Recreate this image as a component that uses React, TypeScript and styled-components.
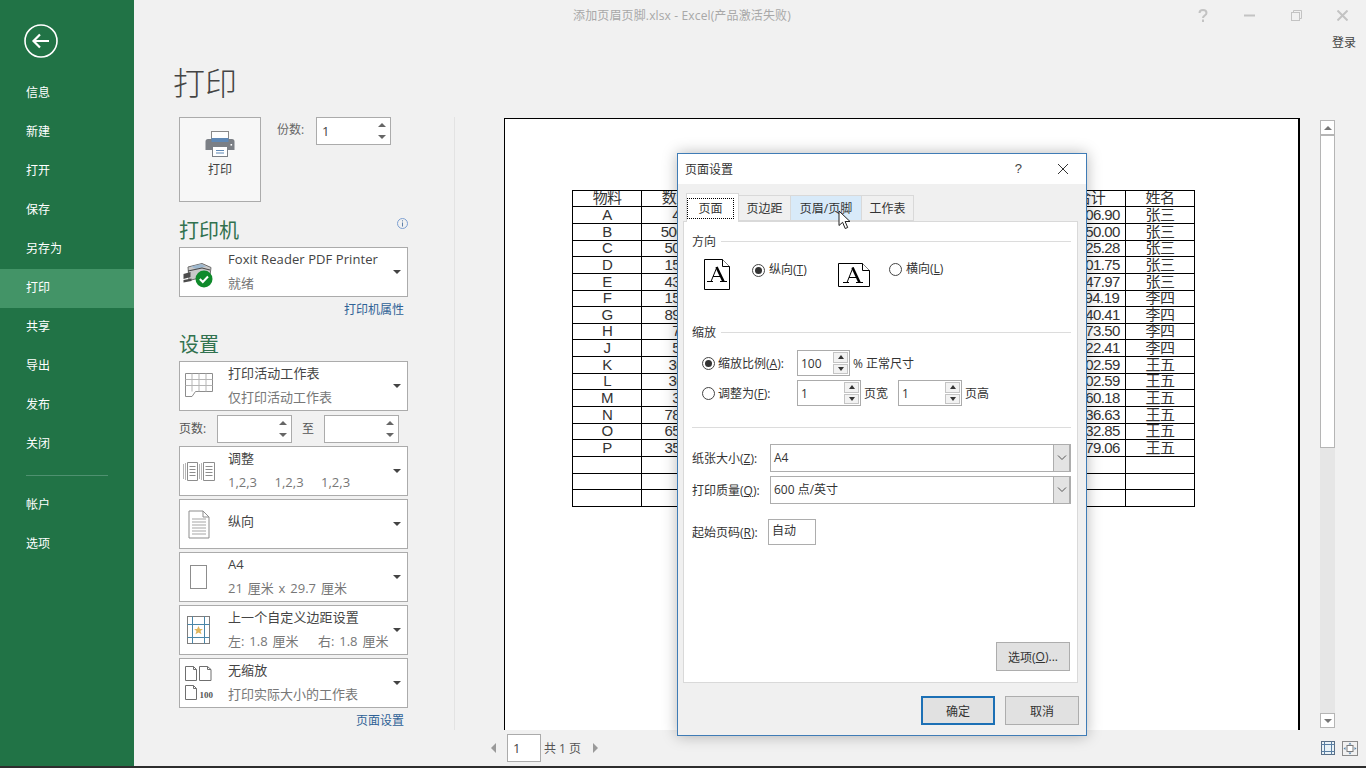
import React from "react";
import styled, { createGlobalStyle } from "styled-components";

const UI_FONT = `"Open Sans", "Noto Sans CJK SC", sans-serif`;

const GlobalStyle = createGlobalStyle`
    html, body {
        margin: 0;
        padding: 0;
        background: #f1f1f1;
    }

    * {
        box-sizing: border-box;
    }

    body {
        font-family: ${UI_FONT};
        font-size: 12px;
        color: #444;
    }
`;

const NAV_TOP = ["信息", "新建", "打开", "保存", "另存为", "打印", "共享", "导出", "发布", "关闭"];
const NAV_BOTTOM = ["帐户", "选项"];

// row heights of the sheet, the printed preview does not snap evenly
const ROW_HEIGHTS = [16, 17, 17, 16, 17, 17, 16, 17, 16, 17, 17, 16, 17, 17, 16, 17, 17, 16, 17];

const SHEET_ROWS = [
    ["物料", "数量", "合计", "姓名"],
    ["A", "4", "12006.90", "张三"],
    ["B", "5000", "15050.00", "张三"],
    ["C", "500", "12525.28", "张三"],
    ["D", "150", "10101.75", "张三"],
    ["E", "430", "12347.97", "张三"],
    ["F", "150", "11494.19", "李四"],
    ["G", "890", "12340.41", "李四"],
    ["H", "7", "12373.50", "李四"],
    ["J", "5", "10022.41", "李四"],
    ["K", "30", "10002.59", "王五"],
    ["L", "30", "10002.59", "王五"],
    ["M", "3", "12360.18", "王五"],
    ["N", "780", "18636.63", "王五"],
    ["O", "650", "12332.85", "王五"],
    ["P", "350", "12379.06", "王五"],
    ["", "", "", ""],
    ["", "", "", ""],
    ["", "", "", ""],
];

const BackIcon = () => (
    <svg width="34" height="34" viewBox="0 0 34 34" fill="none" stroke="#fff">
        <circle cx="17" cy="17" r="16" strokeWidth="1.6" />
        <path d="M25 17H10M16 10.5L9.5 17l6.5 6.5" strokeWidth="2.2" />
    </svg>
);

const BigPrinterIcon = () => (
    <svg width="30" height="26" viewBox="0 0 30 26">
        <rect x="6.5" y="0.5" width="17" height="9" fill="#fff" stroke="#8a8a8a" />
        <path d="M3 8h24a2.5 2.5 0 0 1 2.5 2.5V19H0.5v-8.500A2.500 2.500 0 0 1 3 8z" fill="#7b7f85" />
        <rect x="6.500" y="7" width="17" height="4" fill="#5f88b5" />
        <rect x="7.500" y="15.500" width="15" height="10" fill="#fff" stroke="#7b7f85" />
        <path d="M11 19.500h8M11 22h8" stroke="#5f88b5" />
        <rect x="25.500" y="13" width="1.600" height="1.600" fill="#fff" />
    </svg>
);

const PrinterStatusIcon = () => (
    <svg width="32" height="36" viewBox="0 -8 32 36">
        <path d="M5 5l14-3.500 9 4-1 8-21 5z" fill="#c9c9c9" stroke="#6d6d6d" />
        <path d="M8 4.500l10-2.500 5 2.500-10 2.500z" fill="#9db8cf" />
        <path d="M0.500 12l7-2 0 5-7 2zM0.500 18l8-1.500 0 2.500-8 1.500z" fill="#4c4c4c" />
        <path d="M5 9l14-3 8 2" fill="none" stroke="#444" />
        <circle cx="21" cy="17" r="8.500" fill="#0f8a2b" />
        <path d="M16.800 17l3 3 5.200-5.500" fill="none" stroke="#fff" strokeWidth="2" />
    </svg>
);

const InfoIcon = () => (
    <svg width="11" height="11" viewBox="0 0 11 11" fill="none">
        <circle cx="5.500" cy="5.500" r="5" stroke="#7d9fd0" />
        <path d="M5.500 4.500v4" stroke="#5d7fa8" />
        <path d="M5.500 2.300v1.100" stroke="#5d7fa8" />
    </svg>
);

const SheetIcon = () => (
    <svg width="28" height="26" viewBox="0 0 28 26" fill="none" stroke="#8d8d8d">
        <path d="M0.500 0.500h27v18h-17l-3.500 5h-6.500z" />
        <path d="M0.500 6.500h27M0.500 12.500h27M7 0.500v18M14 0.500v18M21 0.500v18" stroke="#b5b5b5" />
    </svg>
);

const CollateIcon = () => (
    <svg width="32" height="21" viewBox="0 0 32 21" fill="none" stroke="#8d8d8d">
        <path d="M0.500 3v15M2.500 2v17" stroke="#b5b5b5" />
        <path d="M4.500 1.500h10v18h-10zM6.500 5.500h6M6.500 8.500h6M6.500 11.500h6M6.500 14.500h6" />
        <path d="M16.500 3v15M18.500 2v17" stroke="#b5b5b5" />
        <path d="M20.500 1.500h11v18h-11zM22.500 5.500h7M22.500 8.500h7M22.500 11.500h7M22.500 14.500h7" />
    </svg>
);

const PortraitIcon = () => (
    <svg width="22" height="29" viewBox="0 0 22 29" fill="none" stroke="#8d8d8d">
        <path d="M1 1h14l6 6v21H1zM15 1v6h6" />
        <path d="M4 9h14M4 12h14M4 15h14M4 18h14M4 21h14M4 24h14" stroke="#a5a5a5" />
    </svg>
);

const PaperIcon = () => (
    <svg width="18" height="25" viewBox="0 0 18 25" fill="none">
        <rect x="0.500" y="0.500" width="16" height="23" stroke="#8d8d8d" />
    </svg>
);

const MarginsIcon = () => (
    <svg width="24" height="29" viewBox="0 0 24 29" fill="none">
        <rect x="0.500" y="0.500" width="22" height="27" stroke="#7d7d7d" />
        <path d="M5.500 0.500v27M17.500 0.500v27M0.500 8.500h22M0.500 21.500h22" stroke="#4a86a8" />
        <path d="M11.500 10l1.400 3h3l-2.400 2 1 3.200-3-1.800-3 1.800 1-3.200-2.400-2h3z" fill="#e0b65c" />
    </svg>
);

const NoScaleIcon = () => (
    <svg width="30" height="35" viewBox="0 0 30 35" fill="none" stroke="#6f6f6f">
        <path d="M0.500 0.500h8l3 3v11h-11zM8.500 0.500v3h3" />
        <path d="M14.500 0.500h8l3.500 3v11h-11.500zM22.500 0.500v3h3.500" />
        <path d="M0.500 19.500h8l3 3v11h-11zM8.500 19.500v3h3" />
    </svg>
);

const PortraitSheetIcon = () => (
    <svg width="26" height="31" viewBox="0 0 26 31">
        <path d="M0.500 0.500h18l7 7v23h-25z" fill="#fff" stroke="#000" />
        <path d="M18.500 0.500v7h7" fill="#fff" stroke="#000" />
        <path d="M3 22.500h6M16 22.500h7M7 22.500L13 8M9 17.500h8" fill="none" stroke="#000" />
        <path d="M12.500 8L19.500 22.500" fill="none" stroke="#000" strokeWidth="2.500" />
    </svg>
);

const LandscapeSheetIcon = () => (
    <svg width="32" height="24" viewBox="0 0 32 24">
        <path d="M0.500 0.500h24l7 7v16h-31z" fill="#fff" stroke="#000" />
        <path d="M24.500 0.500v7h7" fill="#fff" stroke="#000" />
        <path d="M5 19.500h6M18 19.500h7M9 19.500L15 4.500M11 14.500h8" fill="none" stroke="#000" />
        <path d="M14.500 4.500L21.500 19.500" fill="none" stroke="#000" strokeWidth="2.500" />
    </svg>
);

const CursorIcon = () => (
    <svg width="14" height="20" viewBox="0 0 14 20">
        <path d="M1 1v14.500l3.600-3.200 2.600 6.200 2.500-1-2.600-6h4.900z" fill="#fff" stroke="#1f1f1f" />
    </svg>
);

const HelpGlyph = () => (
    <svg width="10" height="13" viewBox="0 0 10 13" fill="none" stroke="#c3c3c3" strokeWidth="2">
        <path d="M1.500 4c0-4 7-4 7 0 0 2.500-3.500 2.500-3.500 5" />
        <path d="M5 10.500V13" />
    </svg>
);

const MinimizeGlyph = () => (
    <svg width="11" height="3" viewBox="0 0 11 3">
        <rect width="11" height="2" y="0.500" fill="#c3c3c3" />
    </svg>
);

const RestoreGlyph = () => (
    <svg width="11" height="11" viewBox="0 0 11 11" fill="none" stroke="#c3c3c3">
        <rect x="0.500" y="2.500" width="8" height="8" />
        <path d="M2.500 2.500v-2h8v8h-2" />
    </svg>
);

const CloseGlyph = () => (
    <svg width="11" height="11" viewBox="0 0 11 11" stroke="#c3c3c3" strokeWidth="2">
        <path d="M0.500 0.500l10 10M10.500 0.500l-10 10" />
    </svg>
);

const GridViewIcon = () => (
    <svg width="14" height="14" viewBox="0 0 14 14" fill="none">
        <rect x="0.500" y="0.500" width="13" height="13" fill="#e9f3f8" stroke="#5a6f86" />
        <path d="M3.500 0.500v13M10.500 0.500v13M0.500 3.500h13M0.500 10.500h13" stroke="#5a7fa3" />
    </svg>
);

const FitViewIcon = () => (
    <svg width="16" height="15" viewBox="0 0 16 15" fill="none">
        <rect x="0.500" y="0.500" width="15" height="14" stroke="#8a8a8a" />
        <rect x="5" y="4.500" width="6" height="6" fill="#fff" stroke="#7a7a7a" />
        <path d="M8 1.500L6.500 3.500h3zM8 13.500L6.500 11.500h3zM1.500 7.500L3.500 6v3zM14.500 7.500L12.500 6v3z" fill="#5a86ab" />
    </svg>
);

const Key = ({ children }: { children: React.ReactNode }) => <AccessKey>{children}</AccessKey>;

interface SpinBoxProps {
    value: string;
    width: number;
}

const SpinBox = ({ value, width }: SpinBoxProps) => (
    <SpinFrame $width={width}>
        {value}
        <SpinButtons>
            <SpinButton><Triangle $dir="up" /></SpinButton>
            <SpinButton><Triangle $dir="down" /></SpinButton>
        </SpinButtons>
    </SpinFrame>
);

interface PlainSpinProps {
    value?: string;
    width: number;
}

const PlainSpin = ({ value, width }: PlainSpinProps) => (
    <PlainSpinFrame $width={width}>
        {value}
        <PlainArrows>
            <Triangle $dir="up" />
            <Triangle $dir="down" />
        </PlainArrows>
    </PlainSpinFrame>
);

interface OptionDropdownProps {
    icon: React.ReactNode;
    title: string;
    subtitle?: React.ReactNode;
}

const OptionDropdown = ({ icon, title, subtitle }: OptionDropdownProps) => (
    <Dropdown>
        <DropdownIcon>{icon}</DropdownIcon>
        <DropdownText $single={!subtitle}>
            <DropdownTitle>{title}</DropdownTitle>
            {subtitle && <DropdownSubtitle>{subtitle}</DropdownSubtitle>}
        </DropdownText>
        <Triangle $dir="down" $size={4} $color="#444" />
    </Dropdown>
);

const SelectBox = ({ value }: { value: string }) => (
    <SelectFrame>
        <SelectValue>{value}</SelectValue>
        <SelectArrow>
            <svg width="10" height="6" viewBox="0 0 10 6" fill="none" stroke="#555">
                <path d="M1 0.500l4 4 4-4" />
            </svg>
        </SelectArrow>
    </SelectFrame>
);

const Sidebar = () => (
    <SidebarWrapper>
        <BackButton><BackIcon /></BackButton>
        {NAV_TOP.map((item) => (
            <NavItem key={item} $active={item === "打印"}>{item}</NavItem>
        ))}
        <NavDivider />
        {NAV_BOTTOM.map((item) => (
            <NavItem key={item}>{item}</NavItem>
        ))}
    </SidebarWrapper>
);

const PrintPanel = () => (
    <LeftColumn>
        <PageTitle>打印</PageTitle>
        <Panel>
            <PrintRow>
                <PrintButton>
                    <BigPrinterIcon />
                    <span>打印</span>
                </PrintButton>
                <CopiesLabel>份数:</CopiesLabel>
                <PlainSpin value="1" width={75} />
            </PrintRow>

            <SectionHead>
                打印机
                <InfoMark><InfoIcon /></InfoMark>
            </SectionHead>
            <Dropdown>
                <DropdownIcon><PrinterStatusIcon /></DropdownIcon>
                <DropdownText>
                    <DropdownTitle>Foxit Reader PDF Printer</DropdownTitle>
                    <DropdownSubtitle>就绪</DropdownSubtitle>
                </DropdownText>
                <Triangle $dir="down" $size={4} $color="#444" />
            </Dropdown>
            <PanelLink>打印机属性</PanelLink>

            <SettingsHead>设置</SettingsHead>
            <OptionDropdown icon={<SheetIcon />} title="打印活动工作表" subtitle="仅打印活动工作表" />
            <PagesRow>
                <PagesLabel>页数:</PagesLabel>
                <PlainSpin width={75} />
                <ToLabel>至</ToLabel>
                <PlainSpin width={75} />
            </PagesRow>
            <DropdownStack>
                <OptionDropdown
                    icon={<CollateIcon />}
                    title="调整"
                    subtitle={<CollatePages>1,2,3    1,2,3    1,2,3</CollatePages>}
                />
                <OptionDropdown icon={<PortraitIcon />} title="纵向" />
                <OptionDropdown icon={<PaperIcon />} title="A4" subtitle="21 厘米 x 29.7 厘米" />
                <OptionDropdown icon={<MarginsIcon />} title="上一个自定义边距设置" subtitle="左: 1.8 厘米    右: 1.8 厘米" />
                <OptionDropdown
                    icon={
                        <NoScaleWrap>
                            <NoScaleIcon />
                            <NoScaleBadge>100</NoScaleBadge>
                        </NoScaleWrap>
                    }
                    title="无缩放"
                    subtitle="打印实际大小的工作表"
                />
            </DropdownStack>
            <PanelLink>页面设置</PanelLink>
        </Panel>
    </LeftColumn>
);

const Preview = () => (
    <PreviewColumn>
        <PreviewRow>
            <Page>
                <SheetTable>
                    <tbody>
                        {SHEET_ROWS.map((row, index) => (
                            <SheetRow key={index} $height={ROW_HEIGHTS[index]}>
                                <td>{row[0]}</td>
                                <td>{row[1]}</td>
                                <td /><td /><td /><td /><td />
                                <td>{row[2]}</td>
                                <td>{row[3]}</td>
                            </SheetRow>
                        ))}
                    </tbody>
                </SheetTable>
            </Page>
            <Scrollbar>
                <ScrollButton><Triangle $dir="up" $size={4} $color="#777" /></ScrollButton>
                <ScrollThumb />
                <ScrollTrack />
                <ScrollButton><Triangle $dir="down" $size={4} $color="#777" /></ScrollButton>
            </Scrollbar>
        </PreviewRow>
        <PagerBar>
            <PagerGroup>
                <SideArrow $dir="left" />
                <PageInput>1</PageInput>
                <PageTotal>共 1 页</PageTotal>
                <SideArrow $dir="right" />
            </PagerGroup>
            <ViewIcons>
                <GridViewIcon />
                <FitViewIcon />
            </ViewIcons>
        </PagerBar>
    </PreviewColumn>
);

const PageSetupDialog = () => (
    <Dialog>
        <DialogTitleBar>
            <span>页面设置</span>
            <DialogActions>
                <HelpMark>?</HelpMark>
                <svg width="12" height="12" viewBox="0 0 12 12" stroke="#333">
                    <path d="M1 1l10 10M11 1L1 11" />
                </svg>
            </DialogActions>
        </DialogTitleBar>

        <TabList>
            <Tab $selected><TabFocus>页面</TabFocus></Tab>
            <Tab $width={52}>页边距</Tab>
            <Tab $width={71} $hover>页眉/页脚</Tab>
            <Tab $width={52}>工作表</Tab>
        </TabList>
        <CursorMark><CursorIcon /></CursorMark>

        <TabPanel>
            <GroupHead>方向</GroupHead>
            <OrientationRow>
                <OrientationOption $width={134}>
                    <PortraitSheetIcon />
                    <RadioLabel $gap={22}>
                        <Radio $checked />
                        <span>纵向(<Key>T</Key>)</span>
                    </RadioLabel>
                </OrientationOption>
                <OrientationOption $shift={4}>
                    <LandscapeSheetIcon />
                    <RadioLabel $gap={19} $shift={-3}>
                        <Radio />
                        <span>横向(<Key>L</Key>)</span>
                    </RadioLabel>
                </OrientationOption>
            </OrientationRow>

            <GroupHead>缩放</GroupHead>
            <ScaleRow $top={9}>
                <ScaleChoice>
                    <Radio $checked />
                    <span>缩放比例(<Key>A</Key>):</span>
                </ScaleChoice>
                <SpinBox value="100" width={53} />
                <span>% 正常尺寸</span>
            </ScaleRow>
            <ScaleRow $top={4}>
                <ScaleChoice>
                    <Radio />
                    <span>调整为(<Key>F</Key>):</span>
                </ScaleChoice>
                <SpinBox value="1" width={64} />
                <span>页宽</span>
                <SpinBox value="1" width={64} />
                <span>页高</span>
            </ScaleRow>
            <GroupLine />

            <FieldRow $top={16}>
                <FieldLabel $width={78}>纸张大小(<Key>Z</Key>):</FieldLabel>
                <SelectBox value="A4" />
            </FieldRow>
            <FieldRow $top={4}>
                <FieldLabel $width={78}>打印质量(<Key>Q</Key>):</FieldLabel>
                <SelectBox value="600 点/英寸" />
            </FieldRow>
            <FieldRow $top={15}>
                <FieldLabel $width={76}>起始页码(<Key>R</Key>):</FieldLabel>
                <TextField>自动</TextField>
            </FieldRow>

            <OptionsRow>
                <DialogButton>选项(<Key>O</Key>)...</DialogButton>
            </OptionsRow>
        </TabPanel>

        <DialogFooter>
            <DialogButton $primary>确定</DialogButton>
            <DialogButton>取消</DialogButton>
        </DialogFooter>
    </Dialog>
);

const App = () => (
    <>
        <GlobalStyle />
        <Window>
            <WindowBody>
                <Sidebar />
                <Main>
                    <TopBar>
                        <CaptionRow>
                            <Caption>添加页眉页脚.xlsx - Excel(产品激活失败)</Caption>
                            <WindowControls>
                                <WindowControl><HelpGlyph /></WindowControl>
                                <WindowControl><MinimizeGlyph /></WindowControl>
                                <WindowControl><RestoreGlyph /></WindowControl>
                                <WindowControl><CloseGlyph /></WindowControl>
                            </WindowControls>
                        </CaptionRow>
                        <SignIn>登录</SignIn>
                    </TopBar>
                    <Content>
                        <PrintPanel />
                        <VerticalRule />
                        <Preview />
                    </Content>
                </Main>
            </WindowBody>
            <TaskbarEdge />
            <PageSetupDialog />
        </Window>
    </>
);

const Window = styled.div`
    position: relative;
    display: flex;
    flex-direction: column;
    width: 1366px;
    height: 768px;
    overflow: hidden;
    background: #f1f1f1;
`;

const WindowBody = styled.div`
    display: flex;
    flex: 1;
    min-height: 0;
`;

const TaskbarEdge = styled.div`
    height: 2px;
    background: #2e2e2e;
`;

const SidebarWrapper = styled.nav`
    display: flex;
    flex-direction: column;
    flex: none;
    width: 134px;
    padding-top: 24px;
    background: #217346;
`;

const BackButton = styled.div`
    height: 50px;
    padding-left: 24px;
`;

const NavItem = styled.div<{ $active?: boolean }>`
    flex: none;
    height: 39px;
    padding-left: 26px;
    line-height: 37px;
    font-size: 12px;
    color: #fff;
    background: ${({ $active }) => ($active ? "#439467" : "transparent")};
`;

const NavDivider = styled.div`
    height: 1px;
    margin: 11px 26px 10px;
    background: #4f9170;
`;

const Main = styled.main`
    display: flex;
    flex-direction: column;
    flex: 1;
    min-width: 0;
`;

const TopBar = styled.header`
    display: flex;
    flex-direction: column;
    flex: none;
    height: 57px;
`;

const CaptionRow = styled.div`
    position: relative;
    display: flex;
    justify-content: flex-end;
    height: 31px;
`;

const Caption = styled.div`
    position: absolute;
    top: 7px;
    left: 439px;
    line-height: 18px;
    font-size: 12px;
    letter-spacing: 0.14px;
    color: #a8a8a8;
`;

const WindowControls = styled.div`
    display: flex;
`;

const WindowControl = styled.div`
    display: flex;
    justify-content: center;
    align-items: center;
    width: 46.5px;
    height: 31px;
`;

const SignIn = styled.div`
    align-self: flex-end;
    margin-right: 10px;
    margin-top: 3px;
    line-height: 18px;
    font-size: 12px;
    color: #444;
`;

const Content = styled.div`
    display: flex;
    flex: 1;
    min-height: 0;
`;

const LeftColumn = styled.section`
    flex: none;
    width: 320px;
    padding-left: 41px;
`;

const PageTitle = styled.h1`
    height: 50px;
    margin: 0 0 10px -2px;
    line-height: 52px;
    font-size: 32px;
    font-weight: 300;
    color: #444;
`;

const Panel = styled.div`
    width: 229px;
    margin-left: 4px;
`;

const PrintRow = styled.div`
    display: flex;
    align-items: flex-start;
`;

const PrintButton = styled.div`
    display: flex;
    flex-direction: column;
    align-items: center;
    gap: 3px;
    width: 82px;
    height: 85px;
    padding-top: 13px;
    border: 1px solid #ababab;
    background: #f7f7f7;
    font-size: 12px;
`;

const CopiesLabel = styled.div`
    width: 39px;
    margin-left: 16px;
    margin-top: 4px;
    line-height: 18px;
    color: #666;
`;

const PlainSpinFrame = styled.div<{ $width: number }>`
    position: relative;
    flex: none;
    width: ${({ $width }) => $width}px;
    height: 28px;
    padding-left: 5px;
    border: 1px solid #ababab;
    background: #fff;
    line-height: 26px;
    font-size: 13px;
`;

const PlainArrows = styled.div`
    position: absolute;
    top: 5px;
    right: 3px;
    display: flex;
    flex-direction: column;
    align-items: center;
    gap: 8px;
    width: 10px;
`;

const Triangle = styled.span<{ $dir: "up" | "down"; $size?: number; $color?: string }>`
    display: block;
    flex: none;
    width: 0;
    height: 0;
    border-left: ${({ $size }) => $size ?? 4}px solid transparent;
    border-right: ${({ $size }) => $size ?? 4}px solid transparent;
    ${({ $dir, $size, $color }) =>
        `border-${$dir === "up" ? "bottom" : "top"}: ${$size ?? 4}px solid ${$color ?? "#666"};`}
`;

const SectionHead = styled.h2`
    display: flex;
    justify-content: space-between;
    height: 28px;
    margin: 14px 0 3px;
    line-height: 30px;
    font-size: 20px;
    font-weight: 400;
    color: #31724f;
`;

const SettingsHead = styled(SectionHead)`
    margin-top: 9px;
`;

const InfoMark = styled.span`
    display: flex;
    margin-top: 2px;
    height: 11px;
`;

const Dropdown = styled.div`
    display: flex;
    align-items: center;
    flex: none;
    height: 50px;
    padding-right: 6px;
    border: 1px solid #ababab;
    background: #fff;
`;

const DropdownIcon = styled.div`
    display: flex;
    justify-content: center;
    align-items: center;
    flex: none;
    width: 38px;
    margin-right: 10px;
`;

const DropdownText = styled.div<{ $single?: boolean }>`
    display: flex;
    flex-direction: column;
    flex: 1;
    min-width: 0;
    margin-top: ${({ $single }) => ($single ? "-6px" : "-3px")};
    justify-content: ${({ $single }) => ($single ? "center" : "flex-start")};
`;

const DropdownTitle = styled.div`
    line-height: 24px;
    font-size: 13px;
    letter-spacing: 0.08px;
    color: #444;
    white-space: nowrap;
`;

const DropdownSubtitle = styled.div`
    line-height: 24px;
    font-size: 13px;
    word-spacing: 1.5px;
    color: #777;
    white-space: pre;
`;

const CollatePages = styled.span`
    word-spacing: 1px;
`;

const PanelLink = styled.div`
    height: 24px;
    padding-right: 4px;
    line-height: 25px;
    text-align: right;
    font-size: 12px;
    color: #2f6296;
`;

const PagesRow = styled.div`
    display: flex;
    align-items: center;
    margin: 4px 0 3px;
`;

const PagesLabel = styled.div`
    width: 38px;
    margin-top: -3px;
    color: #555;
`;

const ToLabel = styled.div`
    width: 32px;
    margin-top: -3px;
    text-align: center;
    color: #555;
`;

const DropdownStack = styled.div`
    display: flex;
    flex-direction: column;
    gap: 3px;
`;

const NoScaleWrap = styled.div`
    position: relative;
    width: 30px;
    height: 35px;
    margin-left: 2px;
`;

const NoScaleBadge = styled.span`
    position: absolute;
    right: 2px;
    bottom: 0;
    line-height: 12px;
    font-family: "Liberation Serif", serif;
    font-size: 9px;
    font-weight: 700;
    color: #555;
`;

const VerticalRule = styled.div`
    flex: none;
    width: 1px;
    margin: 60px 0 36px;
    background: #e3e3e3;
`;

const PreviewColumn = styled.section`
    display: flex;
    flex-direction: column;
    flex: 1;
    min-width: 0;
    padding-top: 61px;
`;

const PreviewRow = styled.div`
    display: flex;
    align-items: flex-start;
    gap: 20px;
    height: 612px;
    padding-left: 49px;
`;

const Page = styled.div`
    flex: none;
    width: 796px;
    height: 612px;
    padding: 71px 0 0 67px;
    overflow: hidden;
    border-top: 1.500px solid #000;
    border-left: 1.500px solid #000;
    border-right: 2px solid #000;
    background: #fff;
`;

const SheetTable = styled.table`
    width: 623px;
    table-layout: fixed;
    border-collapse: collapse;
    font-family: "Liberation Sans", "Noto Sans CJK SC", sans-serif;
    font-size: 15px;
    letter-spacing: -0.6px;
    color: #333;

    td {
        padding: 0 0 1px;
        border: 1px solid #000;
        line-height: 14px;
        text-align: center;
        vertical-align: bottom;
        overflow: hidden;
        white-space: nowrap;
    }
`;

const SheetRow = styled.tr<{ $height: number }>`
    height: ${({ $height }) => $height}px;
`;

const Scrollbar = styled.div`
    display: flex;
    flex-direction: column;
    flex: none;
    width: 15px;
    height: 608px;
    margin-top: 2px;
`;

const ScrollButton = styled.div`
    display: flex;
    justify-content: center;
    align-items: center;
    flex: none;
    height: 15px;
    border: 1px solid #b5b5b5;
    background: #fff;
`;

const ScrollThumb = styled.div`
    flex: none;
    height: 313px;
    border: 1px solid #b5b5b5;
    background: #fff;
`;

const ScrollTrack = styled.div`
    flex: 1;
    background: #e6e6e6;
`;

const PagerBar = styled.div`
    display: flex;
    justify-content: space-between;
    align-items: center;
    height: 36px;
    padding: 0 8px 0 36px;
`;

const PagerGroup = styled.div`
    display: flex;
    align-items: center;
`;

const SideArrow = styled.span<{ $dir: "left" | "right" }>`
    flex: none;
    width: 0;
    height: 0;
    border-top: 5px solid transparent;
    border-bottom: 5px solid transparent;
    ${({ $dir }) => `border-${$dir === "left" ? "right" : "left"}: 5px solid #9a9a9a;`}
`;

const PageInput = styled.div`
    width: 34px;
    height: 28px;
    margin-left: 11px;
    padding-left: 5px;
    border: 1px solid #ababab;
    background: #fff;
    line-height: 26px;
    font-size: 13px;
`;

const PageTotal = styled.div`
    width: 52px;
    padding-left: 3px;
    font-size: 12px;
    color: #555;
`;

const ViewIcons = styled.div`
    display: flex;
    align-items: center;
    gap: 7px;
`;

const Dialog = styled.div`
    position: absolute;
    top: 153px;
    left: 677px;
    display: flex;
    flex-direction: column;
    width: 410px;
    height: 583px;
    border: 1px solid #3f7cb6;
    background: #f0f0f0;
    box-shadow: 0 0 14px rgba(0, 0, 0, 0.28);
    color: #333;
`;

const DialogTitleBar = styled.div`
    display: flex;
    justify-content: space-between;
    align-items: center;
    flex: none;
    height: 30px;
    padding: 0 17px 1px 7px;
    background: #fff;
    font-size: 12px;
`;

const DialogActions = styled.div`
    display: flex;
    align-items: center;
    gap: 35px;
`;

const HelpMark = styled.span`
    font-family: "Liberation Sans", sans-serif;
    font-size: 13px;
    color: #444;
`;

const TabList = styled.div`
    display: flex;
    align-items: flex-end;
    flex: none;
    height: 37px;
    padding-left: 8px;
`;

const Tab = styled.div<{ $selected?: boolean; $hover?: boolean; $width?: number }>`
    position: relative;
    z-index: ${({ $selected }) => ($selected ? 1 : 0)};
    display: flex;
    justify-content: center;
    align-items: center;
    flex: none;
    width: ${({ $width }) => ($width ? `${$width}px` : "53px")};
    height: ${({ $selected }) => ($selected ? "29px" : "26px")};
    margin-bottom: ${({ $selected }) => ($selected ? "-1px" : "0")};
    border: 1px solid #d9d9d9;
    border-bottom: ${({ $selected }) => ($selected ? "none" : "1px solid #d9d9d9")};
    border-left: ${({ $selected }) => ($selected ? "1px solid #d9d9d9" : "none")};
    background: ${({ $selected, $hover }) => ($selected ? "#fff" : $hover ? "#d8eaf9" : "#f0f0f0")};
    font-size: 12px;
`;

const TabFocus = styled.span`
    display: flex;
    justify-content: center;
    align-items: center;
    width: 47px;
    height: 21px;
    margin-right: 4px;
    border: 1px dotted #000;
`;

const CursorMark = styled.div`
    position: absolute;
    top: 56px;
    left: 160px;
    z-index: 3;
    height: 20px;
`;

const TabPanel = styled.div`
    display: flex;
    flex-direction: column;
    flex: none;
    height: 462px;
    margin: 0 8px 0 5px;
    padding: 12px 6px 11px 8px;
    border: 1px solid #d9d9d9;
    background: #fff;
    font-size: 12px;
`;

const GroupHead = styled.div`
    display: flex;
    align-items: center;
    gap: 5px;
    flex: none;
    height: 16px;
    line-height: 16px;

    &::after {
        content: "";
        flex: 1;
        height: 1px;
        margin-top: -1px;
        background: #dcdcdc;
    }
`;

const OrientationRow = styled.div`
    display: flex;
    flex: none;
    height: 75px;
    padding: 9px 0 0 12px;
`;

const OrientationOption = styled.div<{ $width?: number; $shift?: number }>`
    display: flex;
    align-items: flex-start;
    width: ${({ $width }) => ($width ? `${$width}px` : "auto")};
    margin-top: ${({ $shift }) => $shift ?? 0}px;
`;

const RadioLabel = styled.div<{ $gap: number; $shift?: number }>`
    display: flex;
    align-items: center;
    gap: 4px;
    margin-left: ${({ $gap }) => $gap}px;
    margin-top: ${({ $shift }) => $shift ?? 2}px;
    line-height: 18px;
`;

const Radio = styled.span<{ $checked?: boolean }>`
    display: flex;
    justify-content: center;
    align-items: center;
    flex: none;
    width: 13px;
    height: 13px;
    border: 1px solid #444;
    border-radius: 50%;
    background: #fff;

    &::after {
        content: "";
        display: ${({ $checked }) => ($checked ? "block" : "none")};
        width: 7px;
        height: 7px;
        border-radius: 50%;
        background: #333;
    }
`;

const AccessKey = styled.span`
    text-decoration: underline;
`;

const ScaleRow = styled.div<{ $top: number }>`
    display: flex;
    align-items: center;
    gap: 3px;
    flex: none;
    margin-top: ${({ $top }) => $top}px;
    padding-left: 10px;
`;

const ScaleChoice = styled.div`
    display: flex;
    align-items: center;
    gap: 3px;
    width: 92px;
`;

const SpinFrame = styled.div<{ $width: number }>`
    display: flex;
    justify-content: space-between;
    align-items: center;
    flex: none;
    width: ${({ $width }) => $width}px;
    height: 26px;
    padding-left: 3px;
    border: 1px solid #ababab;
    background: #fff;

    & + span {
        margin-right: 7px;
    }
`;

const SpinButtons = styled.div`
    display: flex;
    flex-direction: column;
    gap: 1px;
    width: 15px;
    height: 22px;
    margin-right: 1px;
`;

const SpinButton = styled.div`
    display: flex;
    justify-content: center;
    align-items: center;
    flex: 1;
    border: 1px solid #c4c4c4;
    background: #f2f2f2;

    span {
        border-left-width: 3px;
        border-right-width: 3px;
        border-top-color: #333;
        border-bottom-color: #333;
    }
`;

const GroupLine = styled.div`
    flex: none;
    height: 1px;
    margin-top: 21px;
    background: #dcdcdc;
`;

const FieldRow = styled.div<{ $top: number }>`
    display: flex;
    align-items: center;
    flex: none;
    margin-top: ${({ $top }) => $top}px;
`;

const FieldLabel = styled.div<{ $width: number }>`
    flex: none;
    width: ${({ $width }) => $width}px;
    white-space: nowrap;
`;

const SelectFrame = styled.div`
    display: flex;
    flex: none;
    width: 301px;
    height: 28px;
    border: 1px solid #adadad;
    background: #fff;
`;

const SelectValue = styled.div`
    flex: 1;
    padding-left: 3px;
    line-height: 26px;
`;

const SelectArrow = styled.div`
    display: flex;
    justify-content: center;
    align-items: center;
    flex: none;
    width: 17px;
    border-left: 1px solid #adadad;
    border-right: 1px solid #adadad;
    background: #e3e3e3;
`;

const TextField = styled.div`
    width: 48px;
    height: 26px;
    padding-left: 3px;
    border: 1px solid #adadad;
    line-height: 22px;
`;

const OptionsRow = styled.div`
    display: flex;
    justify-content: flex-end;
    margin-top: auto;
    padding-right: 1px;
`;

const DialogButton = styled.div<{ $primary?: boolean }>`
    display: flex;
    justify-content: center;
    align-items: center;
    flex: none;
    width: 74px;
    height: 29px;
    border: ${({ $primary }) => ($primary ? "2px solid #1c70b5" : "1px solid #adadad")};
    background: #e1e1e1;
    font-size: 12px;
    color: #333;
`;

const DialogFooter = styled.div`
    display: flex;
    justify-content: flex-end;
    gap: 10px;
    padding: 13px 7px 0 0;
`;

export default App;
